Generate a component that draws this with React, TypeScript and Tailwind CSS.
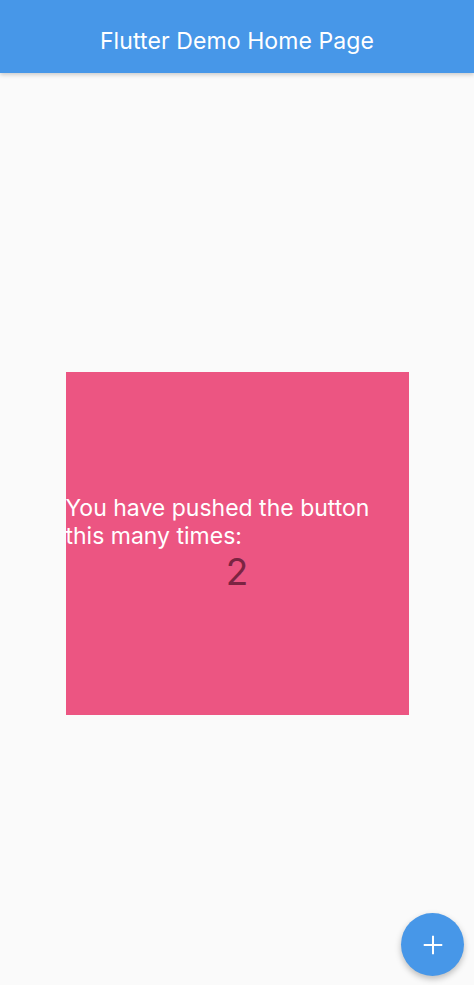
import React from 'react';

export default function App() {
  const [count, setCount] = React.useState(2);

  return (
    <div
      className="relative w-[474px] h-[985px] bg-[#fafafa] flex flex-col overflow-hidden"
      style={{ fontFamily: 'Inter, "Noto Sans", sans-serif' }}
    >
      {/* App bar */}
      <header className="h-[73px] shrink-0 bg-[#4797e8] flex items-center justify-center pt-[9px] shadow-[0_2px_4px_rgba(0,0,0,0.18)] z-10">
        <h1 className="text-white text-[23px] font-normal tracking-[0.1px]">Flutter Demo Home Page</h1>
      </header>

      {/* Body */}
      <main className="flex-1 flex items-center justify-center pt-[29px]">
        <div className="w-[343px] h-[343px] bg-[#ec5582] flex flex-col justify-center">
          <p className="text-white text-[23px] leading-[28px] pr-[30px]">You have pushed the button this many times:</p>
          <p className="text-[#7b2442] text-[37px] leading-[44px] text-center">{count}</p>
        </div>
      </main>

      {/* FAB */}
      <button
        onClick={() => setCount(count + 1)}
        className="absolute right-[10px] bottom-[9px] w-[63px] h-[63px] rounded-full bg-[#4797e8] flex items-center justify-center shadow-[0_3px_6px_rgba(0,0,0,0.25)]"
      >
        <svg width="22" height="22" viewBox="0 0 24 24" fill="none" stroke="white" strokeWidth="2.2" strokeLinecap="square">
          <path d="M12 3v18M3 12h18" />
        </svg>
      </button>

      {/* Debug corner */}
      <div className="absolute -top-[16px] -right-[16px] w-[32px] h-[32px] rotate-45 bg-[#a0304a] opacity-80" />
    </div>
  );
}
